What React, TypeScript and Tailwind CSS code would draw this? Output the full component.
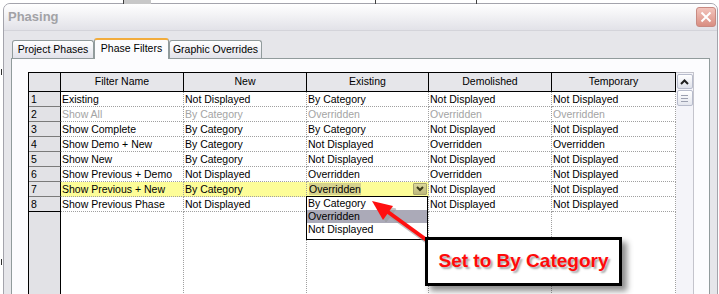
import React from 'react';

type Row = { n: number; cells: string[]; disabled?: boolean; selected?: boolean };

const widths = ['w-[123px]', 'w-[123px]', 'w-[122px]', 'w-[123px]', 'w-[124px]'];
const headers = ['Filter Name', 'New', 'Existing', 'Demolished', 'Temporary'];

const rows: Row[] = [
  { n: 1, cells: ['Existing', 'Not Displayed', 'By Category', 'Not Displayed', 'Not Displayed'] },
  { n: 2, cells: ['Show All', 'By Category', 'Overridden', 'Overridden', 'Overridden'], disabled: true },
  { n: 3, cells: ['Show Complete', 'By Category', 'By Category', 'Not Displayed', 'Not Displayed'] },
  { n: 4, cells: ['Show Demo + New', 'By Category', 'Not Displayed', 'Overridden', 'Overridden'] },
  { n: 5, cells: ['Show New', 'By Category', 'Not Displayed', 'Not Displayed', 'Not Displayed'] },
  { n: 6, cells: ['Show Previous + Demo', 'Not Displayed', 'Overridden', 'Overridden', 'Not Displayed'] },
  { n: 7, cells: ['Show Previous + New', 'By Category', 'Overridden', 'Not Displayed', 'Not Displayed'], selected: true },
  { n: 8, cells: ['Show Previous Phase', 'Not Displayed', '', 'Not Displayed', 'Not Displayed'] },
];

const EditCell = () => (
  <div className="flex items-center justify-between h-full pl-[1px] pr-[1px]">
    <span className="bg-[#d6d28e] leading-[12px] h-[12px]">Overridden</span>
    <div className="w-[14px] h-[12px] rounded-[1px] bg-gradient-to-b from-[#dcd89c] to-[#bdb87c] border border-[#a8a470] flex items-center justify-center">
      <svg width="8" height="6" viewBox="0 0 8 6">
        <path d="M1 1 L4 4 L7 1" stroke="#3a3a1a" strokeWidth="2" fill="none" />
      </svg>
    </div>
  </div>
);

const Tab = ({ label, active, w }: { label: string; active?: boolean; w: string }) =>
  active ? (
    <div className={`${w} h-[21px] -mb-px relative z-10 bg-[#fcfcfe] border border-b-0 border-[#919b9c] border-t-2 border-t-[#f2ac3c] rounded-t-[3px] flex items-center justify-center pb-[2px]`}>
      {label}
    </div>
  ) : (
    <div className={`${w} h-[18px] bg-gradient-to-b from-white to-[#e2e2ea] border border-b-0 border-[#919b9c] rounded-t-[3px] flex items-center justify-center`}>
      {label}
    </div>
  );

export default function App() {
  return (
    <div className="relative w-[719px] h-[294px] overflow-hidden bg-white text-black text-[10.5px] font-['Liberation_Sans',Arial,sans-serif]">
      {/* bits of the window behind */}
      <div className="absolute left-[123px] top-0 w-[28px] h-[4px] border-l border-[#404040] bg-[#c8c8c8]" />
      <div className="absolute left-[375px] top-0 w-px h-[4px] bg-[#404040]" />
      <div className="absolute left-[476px] top-0 w-px h-[4px] bg-[#404040]" />
      <div className="absolute left-[1px] top-[69px] w-px h-[6px] bg-[#303030]" />
      <div className="absolute left-[1px] top-[259px] w-px h-[6px] bg-[#303030]" />

      <div className="ml-[3px] mt-[3px] w-[715px] h-[320px] rounded-t-[7px] border border-[#a4a4ac] bg-[#e6e6ea] flex flex-col">
        {/* title bar */}
        <div className="h-[27px] rounded-t-[6px] bg-gradient-to-b from-white to-[#e2e2e8] border-b border-[#d4d4da] flex items-center justify-between pl-[4px] pr-[1px]">
          <span className="text-[13px] font-bold text-[#a2a2a6]">Phasing</span>
          <div className="w-[20px] h-[20px] rounded-[3px] border border-[#c88a82] bg-gradient-to-b from-[#f2c4bc] to-[#d98e82] flex items-center justify-center">
            <svg width="12" height="12" viewBox="0 0 12 12">
              <path d="M1.5 1.5 L10.5 10.5 M10.5 1.5 L1.5 10.5" stroke="white" strokeWidth="2" />
            </svg>
          </div>
        </div>

        {/* tabs */}
        <div className="flex items-end pl-[8px] pt-[7px] h-[27px]">
          <Tab label="Project Phases" w="w-[82px]" />
          <Tab label="Phase Filters" w="w-[75px]" active />
          <Tab label="Graphic Overrides" w="w-[93px]" />
        </div>

        {/* panel */}
        <div className="mx-[7px] flex-1 border border-[#919b9c] bg-[#fcfcfe] pl-[16px] pt-[13px] flex">
          <div className="flex flex-col border-l border-t border-black bg-white">
            {/* header */}
            <div className="flex h-[19px]">
              <div className="w-[32px] bg-[#e4e4e8] border-r border-b border-black" />
              {headers.map((h, i) => (
                <div key={h} className={`${widths[i]} bg-[#e6e6ea] border-r border-b border-black flex items-center justify-center`}>
                  {h}
                </div>
              ))}
            </div>
            {rows.map((r) => (
              <div key={r.n} className="flex h-[15px]">
                <div className={`w-[32px] bg-[#e2e2e6] border-r border-black border-b ${r.n === 8 ? 'border-b-black' : 'border-b-[#7a7a7a]'} pl-[2px] leading-[14px]`}>
                  {r.n}
                </div>
                {r.cells.map((c, i) => {
                  const yellow = r.selected && i < 3;
                  return (
                    <div
                      key={i}
                      className={`${widths[i]} border-r border-b border-dotted border-[#a0a0a0] leading-[14px] pl-[1px] whitespace-nowrap ${yellow ? 'bg-[#fdfd98]' : ''} ${r.disabled ? 'text-[#a4a4a4]' : ''}`}
                    >
                      {r.selected && i === 2 ? <EditCell /> : c}
                    </div>
                  );
                })}
              </div>
            ))}
            {/* empty area */}
            <div className="flex flex-1">
              <div className="w-[32px] bg-[#e2e2e6] border-r border-black" />
              {widths.map((w, i) => (
                <div key={i} className={`${w} border-r border-dotted border-[#a0a0a0]`} />
              ))}
            </div>
          </div>

          {/* scrollbar */}
          <div className="w-[18px] border-t border-r border-[#c4c4cc] bg-[#f4f4f9] flex flex-col items-center pt-px gap-px">
            <div className="w-[16px] h-[15px] rounded-[2px] border border-[#b8bccc] bg-gradient-to-b from-white to-[#dfe1ea] flex items-center justify-center">
              <svg width="9" height="6" viewBox="0 0 9 6">
                <path d="M1 5 L4.5 1.5 L8 5" stroke="#202020" strokeWidth="2" fill="none" />
              </svg>
            </div>
            <div className="w-[16px] h-[16px] rounded-[2px] border border-[#b8bccc] bg-gradient-to-b from-white to-[#e4e6ee] flex flex-col items-center justify-center gap-[2px]">
              <div className="w-[7px] h-px bg-[#9ca0b0]" />
              <div className="w-[7px] h-px bg-[#9ca0b0]" />
              <div className="w-[7px] h-px bg-[#9ca0b0]" />
            </div>
          </div>
        </div>
      </div>

      {/* dropdown list */}
      <div className="absolute left-[306px] top-[196px] w-[122px] h-[44px] bg-white border border-black leading-[13px] flex flex-col">
        <div className="h-[13px] pl-px">By Category</div>
        <div className="h-[13px] pl-px bg-[#abaab8]">Overridden</div>
        <div className="h-[13px] pl-px">Not Displayed</div>
      </div>

      {/* arrow */}
      <svg className="absolute left-0 top-0" width="719" height="294" viewBox="0 0 719 294">
        <g fill="#9a9a9a" stroke="#9a9a9a" opacity="0.6">
          <line x1="391" y1="216" x2="430" y2="244" strokeWidth="4" />
          <polygon points="375,204 386,222 396,209" />
        </g>
        <line x1="388" y1="212" x2="428" y2="241" stroke="#ff1010" strokeWidth="4" />
        <polygon points="372,201 383,220 393,206" fill="#ff1010" />
      </svg>

      {/* callout */}
      <div className="absolute left-[425px] top-[237px] w-[197px] h-[49px] bg-white border-[3px] border-black shadow-[5px_5px_6px_rgba(0,0,0,0.45)] flex items-center justify-center">
        <span className="text-[19px] font-bold text-[#ff0a0a] font-['Liberation_Sans',Arial,sans-serif] [text-shadow:2px_2px_2px_rgba(0,0,0,0.35)]">
          Set to By Category
        </span>
      </div>
    </div>
  );
}
